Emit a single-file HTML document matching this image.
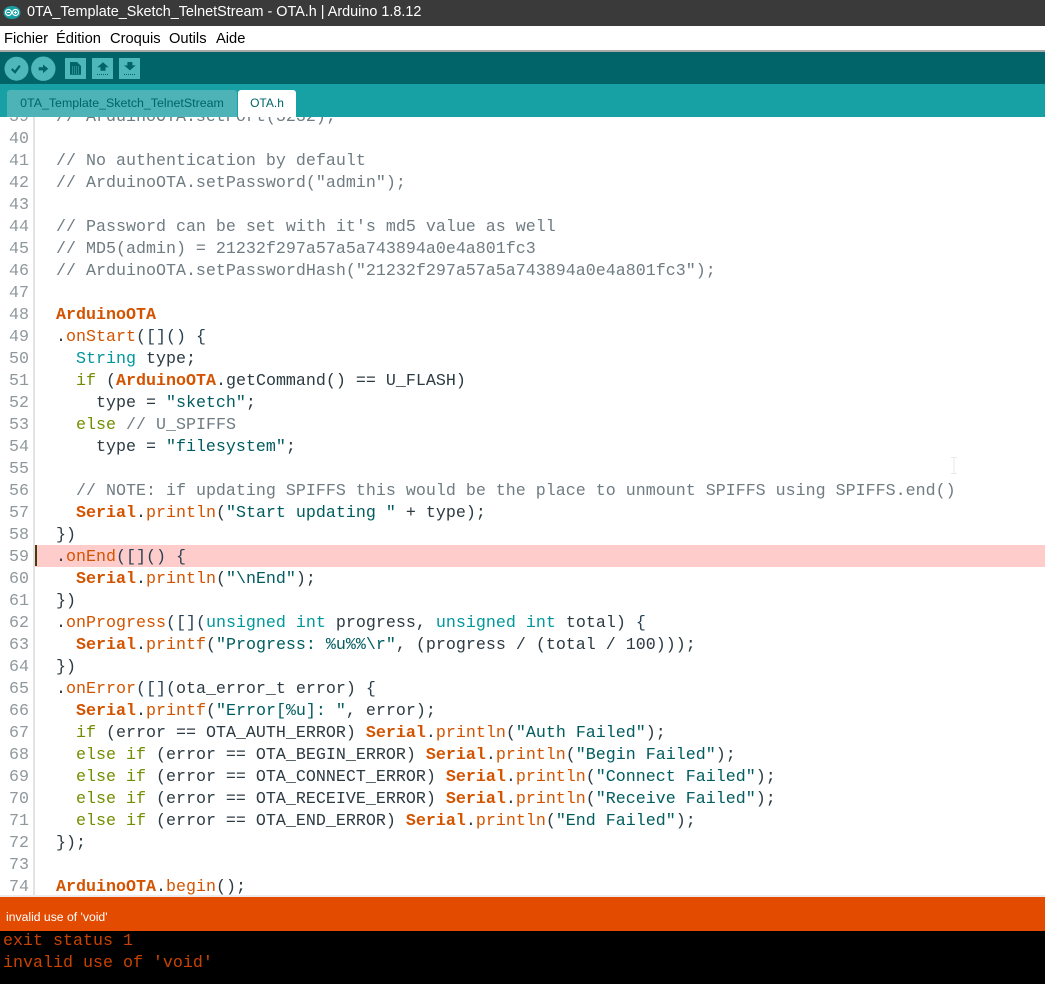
<!DOCTYPE html>
<html><head><meta charset="utf-8"><style>
html,body{margin:0;padding:0;width:1045px;height:984px;overflow:hidden;background:#fff}
body{position:relative;font-family:"Liberation Sans",sans-serif}
div,pre,svg{position:absolute;margin:0}
#title{left:0;top:0;width:1045px;height:26px;background:#3a3a3a;color:#fff;font-size:14.4px;line-height:25px}
#menu{left:0;top:26px;width:1045px;height:24px;background:#fff;color:#000;font-size:14.7px;line-height:27px}
#menu span{position:absolute;top:0}
#rule{left:0;top:50px;width:1045px;height:2px;background:#a8a8a8}
#tb{left:0;top:52px;width:1045px;height:32px;background:#006468}
#tabs{left:0;top:84px;width:1045px;height:33px;background:#17a1a5}
.t{border-radius:3px 3px 0 0;font-size:12px;line-height:27px;text-align:center;color:#006468}
#ed{left:0;top:117px;width:1045px;height:778px;overflow:hidden;background:#fff}
#gl{left:33px;top:0;width:2px;height:778px;background:#e2e2e2}
#hl{left:35px;top:428px;width:1010px;height:22px;background:#ffcccc}
#mk{left:35px;top:428px;width:2px;height:21px;background:#4a3a10}
pre{font-family:"Liberation Mono",monospace;font-size:16.67px;line-height:22px;letter-spacing:0}
#nums{left:0;top:-10px;width:29px;text-align:right;color:#8f989c}
#code{left:56px;top:-10px;color:#2c3a42}
.c{color:#6f7c82}.k{color:#d35400}.b{color:#d35400;font-weight:bold}.o{color:#728e00}.y{color:#00979c}.s{color:#005c5f}.p{color:#2a4254}
#err{left:0;top:895px;width:1045px;height:2px;background:#ececec}
#bar{left:0;top:897px;width:1045px;height:34px;background:#e34c00;color:#fff;font-size:12.2px;line-height:40px;text-indent:6px}
#con{left:0;top:931px;width:1045px;height:53px;background:#000;overflow:hidden}
#con pre{left:3px;top:0;color:#c94300}
</style></head><body>
<div id="title"><svg style="left:3px;top:5px" width="18" height="15" viewBox="0 0 18 15"><ellipse cx="9" cy="7.500" rx="8.500" ry="6.500" fill="#17a1a5"/><circle cx="5.500" cy="7.500" r="3" fill="none" stroke="#fff" stroke-width="1.200"/><circle cx="12.500" cy="7.500" r="3" fill="none" stroke="#fff" stroke-width="1.200"/><path d="M4 7.500h3M11 7.500h3M12.500 6v3" stroke="#fff" stroke-width="1"/></svg><span style="position:absolute;left:27px;top:0;white-space:nowrap">0TA_Template_Sketch_TelnetStream - OTA.h | Arduino 1.8.12</span></div>
<div id="menu"><span style="left:4px">Fichier</span><span style="left:56px">Édition</span><span style="left:110px">Croquis</span><span style="left:169px">Outils</span><span style="left:216px">Aide</span></div>
<div id="rule"></div>
<div id="tb"></div>
<svg style="left:0;top:52px" width="150" height="32" viewBox="0 52 150 32">
<circle cx="16.500" cy="68.700" r="12" fill="#4db7ba"/><path d="M11.800 69l3.200 3.200 4.800-6.500" fill="none" stroke="#006468" stroke-width="2.200"/>
<circle cx="43.300" cy="68.700" r="12.200" fill="#4db7ba"/><path d="M38.700 67.200h4.300v-2.700l5.300 4.300-5.300 4.300v-2.700h-4.300z" fill="#006468"/>
<rect x="65" y="58" width="21" height="21" fill="#4db7ba"/><path d="M70 62h7l4 4v8.700h-11z" fill="#006468"/><path d="M72 67h1M74 67h1M76 67h1M78 67h1M72 69h1M74 69h1M76 69h1M78 69h1M72 71h1M74 71h1M76 71h1M78 71h1M72 73h1M74 73h1M76 73h1M78 73h1" stroke="#4db7ba" stroke-width="1"/>
<rect x="92" y="58" width="21" height="21" fill="#4db7ba"/><path d="M103 62.300l5.700 5h-3.200v3.400h-5v-3.400h-3.200z" fill="#006468"/><path d="M97 74.500h11" stroke="#006468" stroke-width="1" stroke-dasharray="1 1"/>
<rect x="119" y="58" width="21" height="21" fill="#4db7ba"/><path d="M127.400 62h5v3.400h3.300l-5.800 5-5.800-5h3.300z" fill="#006468"/><path d="M124 74.500h11" stroke="#006468" stroke-width="1" stroke-dasharray="1 1"/>
</svg>
<div id="tabs"></div>
<div class="t" style="left:7px;top:90px;width:230px;height:27px;background:#4db3b6;font-size:12.4px">0TA_Template_Sketch_TelnetStream</div>
<div class="t" style="left:238px;top:90px;width:58px;height:27px;background:#fff">OTA.h</div>
<div id="ed">
<div id="gl"></div><div id="hl"></div><div id="mk"></div>
<pre id="nums">39
40
41
42
43
44
45
46
47
48
49
50
51
52
53
54
55
56
57
58
59
60
61
62
63
64
65
66
67
68
69
70
71
72
73
74</pre>
<pre id="code"><span class="c">// ArduinoOTA.setPort(3232);</span>

<span class="c">// No authentication by default</span>
<span class="c">// ArduinoOTA.setPassword("admin");</span>

<span class="c">// Password can be set with it's md5 value as well</span>
<span class="c">// MD5(admin) = 21232f297a57a5a743894a0e4a801fc3</span>
<span class="c">// ArduinoOTA.setPasswordHash("21232f297a57a5a743894a0e4a801fc3");</span>

<span class="b">ArduinoOTA</span>
.<span class="k">onStart</span><span class="p">([]() {</span>
  <span class="y">String</span> type;
  <span class="o">if</span> (<span class="b">ArduinoOTA</span>.getCommand() == U_FLASH)
    type = <span class="s">"sketch"</span>;
  <span class="o">else</span> <span class="c">// U_SPIFFS</span>
    type = <span class="s">"filesystem"</span>;

  <span class="c">// NOTE: if updating SPIFFS this would be the place to unmount SPIFFS using SPIFFS.end()</span>
  <span class="b">Serial</span>.<span class="k">println</span>(<span class="s">"Start updating "</span> + type);
})
.<span class="k">onEnd</span><span class="p">([]() {</span>
  <span class="b">Serial</span>.<span class="k">println</span>(<span class="s">"\nEnd"</span>);
})
.<span class="k">onProgress</span><span class="p">([](</span><span class="y">unsigned</span> <span class="y">int</span> progress, <span class="y">unsigned</span> <span class="y">int</span> total) <span class="p">{</span>
  <span class="b">Serial</span>.<span class="k">printf</span>(<span class="s">"Progress: %u%%\r"</span>, (progress / (total / 100)));
})
.<span class="k">onError</span><span class="p">([](</span>ota_error_t error) <span class="p">{</span>
  <span class="b">Serial</span>.<span class="k">printf</span>(<span class="s">"Error[%u]: "</span>, error);
  <span class="o">if</span> (error == OTA_AUTH_ERROR) <span class="b">Serial</span>.<span class="k">println</span>(<span class="s">"Auth Failed"</span>);
  <span class="o">else if</span> (error == OTA_BEGIN_ERROR) <span class="b">Serial</span>.<span class="k">println</span>(<span class="s">"Begin Failed"</span>);
  <span class="o">else if</span> (error == OTA_CONNECT_ERROR) <span class="b">Serial</span>.<span class="k">println</span>(<span class="s">"Connect Failed"</span>);
  <span class="o">else if</span> (error == OTA_RECEIVE_ERROR) <span class="b">Serial</span>.<span class="k">println</span>(<span class="s">"Receive Failed"</span>);
  <span class="o">else if</span> (error == OTA_END_ERROR) <span class="b">Serial</span>.<span class="k">println</span>(<span class="s">"End Failed"</span>);
});

<span class="b">ArduinoOTA</span>.<span class="k">begin</span>();</pre>
<svg style="left:950px;top:340px" width="8" height="17" viewBox="0 0 8 17"><path d="M1 .5h6M1 16.500h6M4 .5v16" stroke="#e8e8e8" stroke-width="1" fill="none"/></svg>
</div>
<div id="err"></div>
<div id="bar">invalid use of 'void'</div>
<div id="con"><pre>exit status 1
invalid use of 'void'</pre></div>
</body></html>
